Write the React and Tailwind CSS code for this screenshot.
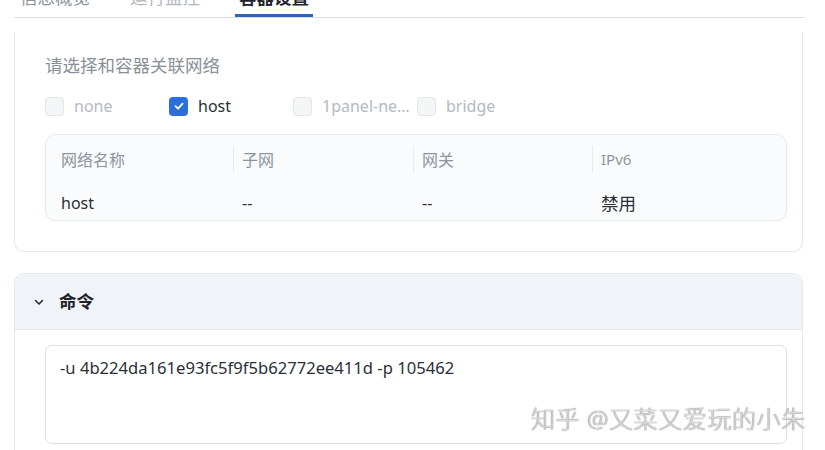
import React from "react";

const font = { fontFamily: '"Noto Sans", "Noto Sans CJK SC", sans-serif' };

function Box({ checked }) {
  if (checked) {
    return (
      <span className="flex h-[19px] w-[19px] shrink-0 items-center justify-center rounded-[4px] bg-[#2a6fdb]">
        <svg width="12" height="12" viewBox="0 0 12 12" fill="none">
          <path d="M2.5 6.2 L5 8.6 L9.6 3.6" stroke="white" strokeWidth="1.8" strokeLinecap="round" strokeLinejoin="round" />
        </svg>
      </span>
    );
  }
  return <span className="h-[19px] w-[19px] shrink-0 rounded-[4px] border border-[#e3e5e8] bg-[#f4f5f7]" />;
}

function Check({ label, checked }) {
  return (
    <div className="flex w-[124px] items-center gap-[10px]">
      <Box checked={checked} />
      <span className={`truncate text-[16px] ${checked ? "text-[#2b2f36]" : "text-[#b4b9c2]"} max-w-[92px]`}>{label}</span>
    </div>
  );
}

export default function App() {
  return (
    <div className="relative h-[450px] w-[825px] overflow-hidden bg-white" style={font}>
      {/* tabs */}
      <div className="ml-[14px] mr-[20px] mt-[-22px] flex h-[40px] items-end border-b border-[#d9dde3]">
        <div className="flex h-full items-center px-[6px] text-[17.5px] text-[#8d939c]">信息概览</div>
        <div className="ml-[28px] flex h-full items-center px-[6px] text-[17.5px] text-[#b1b6be]">运行监控</div>
        <div className="ml-[29px] flex h-full items-center border-b-[3px] border-[#2f63b3] px-[4px] pt-[3px] text-[17.5px] font-bold text-[#1f2329]">容器设置</div>
      </div>

      {/* network card */}
      <div className="ml-[14px] mr-[22px] mt-[14px] rounded-b-[10px] border-x border-b border-[#e4e7ec] pb-[30px] pl-[30px] pr-[15px] pt-[20px]">
        <div className="text-[17.5px] leading-[26px] text-[#8a9099]">请选择和容器关联网络</div>
        <div className="mt-[16px] flex items-center">
          <Check label="none" />
          <Check label="host" checked />
          <Check label="1panel-network" />
          <Check label="bridge" />
        </div>
        <div className="mt-[16px] rounded-[10px] border border-[#e6e9ee] bg-[#f9fbfd] text-[16px]">
          <div className="grid grid-cols-[187px_180px_179px_1fr] pt-[11px]">
            {["网络名称", "子网", "网关", "IPv6"].map((h, i) => (
              <div key={h} className={`flex h-[27px] items-center text-[#8e949d] ${i === 3 ? "text-[15px]" : ""} ${i === 0 ? "pl-[15px]" : "border-l border-[#e8ebef] pl-[8px]"}`}>{h}</div>
            ))}
          </div>
          <div className="grid grid-cols-[187px_180px_179px_1fr] pt-[13px] text-[16px] text-[#2b2f36]">
            <div className="flex h-[34px] items-center pl-[15px]">host</div>
            <div className="flex h-[34px] items-center pl-[9px]">--</div>
            <div className="flex h-[34px] items-center pl-[9px]">--</div>
            <div className="flex h-[34px] items-center pl-[9px] text-[17.5px]">禁用</div>
          </div>
        </div>
      </div>

      {/* command card */}
      <div className="ml-[14px] mr-[22px] mt-[21px] rounded-t-[10px] border border-[#e4e7ec]">
        <div className="flex h-[56px] items-center gap-[14px] rounded-t-[10px] border-b border-[#e4e7ec] bg-[#f0f3f7] pl-[18px]">
          <svg width="12" height="12" viewBox="0 0 12 12" fill="none">
            <path d="M2.5 4.5 L6 8 L9.5 4.5" stroke="#2b2f36" strokeWidth="1.6" strokeLinecap="round" strokeLinejoin="round" />
          </svg>
          <span className="text-[17.5px] font-bold text-[#1f2329]">命令</span>
        </div>
        <div className="pb-[20px] pl-[30px] pr-[15px] pt-[15px]">
          <div className="h-[99px] rounded-[7px] border border-[#dcdfe5] px-[14px] pt-[10px] text-[16.6px] text-[#2b2f36]">
            -u 4b224da161e93fc5f9f5b62772ee411d -p 105462
          </div>
        </div>
      </div>

      {/* watermark */}
      <div
        className="absolute left-[531px] top-[401px] whitespace-nowrap text-[24px] font-light tracking-[0.6px] text-[#dadada]"
        style={{ textShadow: "0 0 1px #8c8c8c, 0 0 1px #8c8c8c" }}
      >
        知乎 @又菜又爱玩的小朱
      </div>
    </div>
  );
}
